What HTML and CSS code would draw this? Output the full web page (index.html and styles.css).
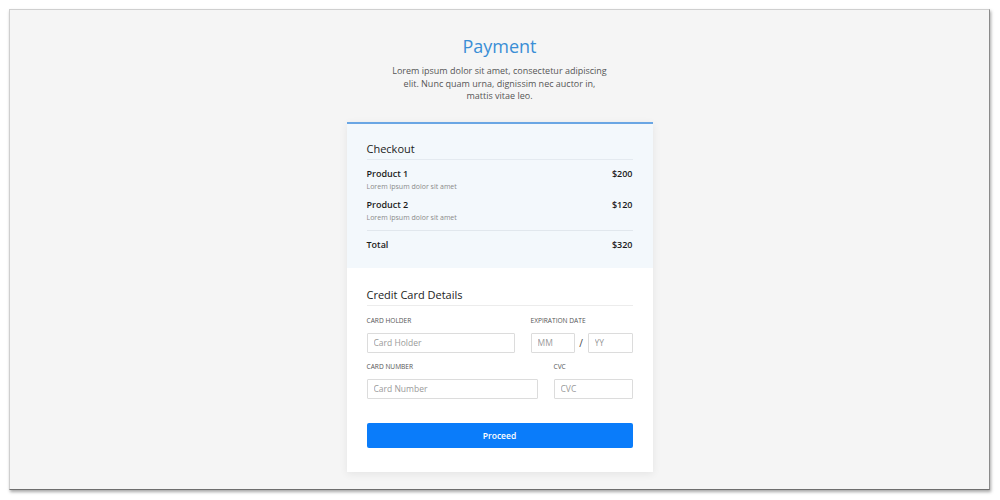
FILE: index.html
```html
<!DOCTYPE html>
<html lang="en">
<head>
<meta charset="utf-8">
<title>Payment</title>
<link rel="stylesheet" href="styles.css">
</head>
<body>
<div class="frame">
  <header class="intro">
    <h1 class="title">Payment</h1>
    <p class="lead">Lorem ipsum dolor sit amet, consectetur adipiscing elit. Nunc quam urna, dignissim nec auctor in, mattis vitae leo.</p>
  </header>
  <section class="card">
    <div class="checkout">
      <h2 class="section-title">Checkout</h2>
      <div class="item">
        <div class="item-info">
          <div class="item-name">Product 1</div>
          <div class="item-desc">Lorem ipsum dolor sit amet</div>
        </div>
        <div class="item-price">$200</div>
      </div>
      <div class="item">
        <div class="item-info">
          <div class="item-name">Product 2</div>
          <div class="item-desc">Lorem ipsum dolor sit amet</div>
        </div>
        <div class="item-price">$120</div>
      </div>
      <div class="total">
        <div class="item-name">Total</div>
        <div class="item-price">$320</div>
      </div>
    </div>
    <div class="details">
      <h2 class="section-title">Credit Card Details</h2>
      <div class="row row-one">
        <div class="field">
          <label class="label">Card Holder</label>
          <input class="input" type="text" placeholder="Card Holder">
        </div>
        <div class="field">
          <label class="label">Expiration Date</label>
          <div class="exp">
            <input class="input" type="text" placeholder="MM">
            <span class="slash">/</span>
            <input class="input" type="text" placeholder="YY">
          </div>
        </div>
      </div>
      <div class="row row-two">
        <div class="field">
          <label class="label">Card Number</label>
          <input class="input" type="text" placeholder="Card Number">
        </div>
        <div class="field">
          <label class="label">CVC</label>
          <input class="input" type="text" placeholder="CVC">
        </div>
      </div>
      <button class="btn" type="button">Proceed</button>
    </div>
  </section>
</div>
</body>
</html>
```

FILE: styles.css
```css
* { box-sizing: border-box; }
html, body { margin: 0; padding: 0; }
body {
  background: #ffffff;
  font-family: "Open Sans", "Noto Sans", sans-serif;
  color: #222;
  padding: 9px 10px 10px 9px;
  width: 1000px;
  height: 500px;
}
.frame {
  width: 981px;
  height: 481px;
  background: #f5f5f5;
  border: 1px solid #cfcfcf;
  border-right-color: #8a8a8a;
  border-bottom-color: #6e6e6e;
  box-shadow: 1px 2px 3px rgba(0,0,0,0.35);
  display: flex;
  flex-direction: column;
  align-items: center;
  padding-top: 25px;
}
.intro { text-align: center; }
.title {
  margin: 0;
  font-size: 18px;
  line-height: 22px;
  font-weight: 400;
  color: #3a8ed6;
}
.lead {
  margin: 8px 0 0;
  width: 218px;
  font-size: 9px;
  line-height: 12.5px;
  color: #555;
}
.card {
  margin-top: 19px;
  width: 306px;
  background: #fff;
  border-top: 2px solid #6aa6e4;
  box-shadow: 0 2px 8px rgba(0,0,0,0.07);
}
.checkout {
  background: #f3f8fc;
  padding: 18px 20px 17px;
}
.section-title {
  margin: 0;
  font-size: 11px;
  line-height: 14px;
  font-weight: 500;
  color: #222;
  padding-bottom: 3px;
  border-bottom: 1px solid #e4eaf0;
}
.item {
  display: flex;
  justify-content: space-between;
  align-items: flex-start;
  margin-top: 8px;
}
.item + .item { margin-top: 8px; }
.item-name {
  font-size: 9px;
  line-height: 12px;
  font-weight: 600;
  color: #1b1b1b;
}
.item-desc {
  margin-top: 2px;
  font-size: 7px;
  line-height: 9px;
  color: #8a8a8a;
}
.item-price {
  font-size: 9px;
  line-height: 12px;
  font-weight: 600;
  color: #1b1b1b;
}
.total {
  display: flex;
  justify-content: space-between;
  margin-top: 8px;
  padding-top: 8px;
  border-top: 1px solid #e1e7ed;
}
.details {
  padding: 20px 20px 24px;
}
.details .section-title { border-bottom-color: #ececec; }
.row {
  display: grid;
  column-gap: 16px;
}
.row-one { grid-template-columns: 148px 102px; margin-top: 11px; }
.row-two { grid-template-columns: 171px 79px; margin-top: 10px; }
.field { display: flex; flex-direction: column; }
.label {
  font-size: 6.6px;
  line-height: 8px;
  text-transform: uppercase;
  color: #555;
  margin-bottom: 8px;
}
.input {
  height: 20px;
  width: 100%;
  border: 1px solid #dcdcdc;
  border-radius: 1px;
  background: #fff;
  padding: 0 6px;
  font-family: inherit;
  font-size: 8.5px;
  color: #333;
  outline: none;
}
.input::placeholder { color: #9a9a9a; }
.exp {
  display: flex;
  align-items: center;
}
.exp .input { width: 44px; flex: 0 0 auto; }
.exp .input:last-child { width: 45px; }
.slash {
  flex: 1;
  text-align: center;
  font-size: 10px;
  color: #444;
}
.btn {
  display: block;
  margin-top: 24px;
  width: 100%;
  height: 25px;
  border: 0;
  border-radius: 2px;
  background: #0a7cfa;
  color: #fff;
  font-family: inherit;
  font-size: 8.5px;
  font-weight: 600;
  cursor: pointer;
}
```
